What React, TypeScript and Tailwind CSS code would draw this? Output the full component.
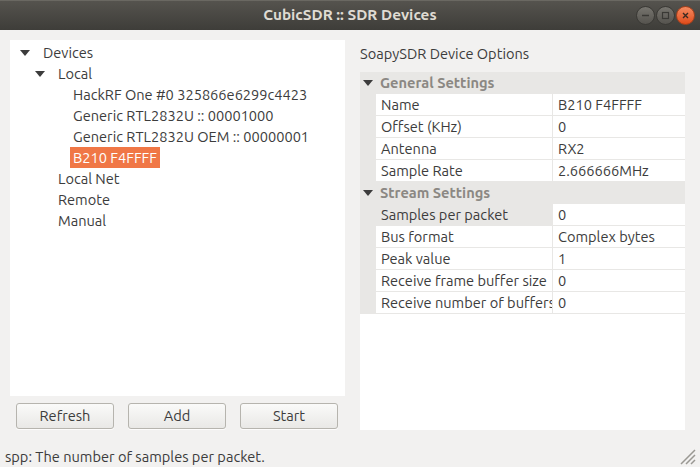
import React from "react";

type Row = { label: string; value: string; selected?: boolean };

const GENERAL: Row[] = [
  { label: "Name", value: "B210 F4FFFF" },
  { label: "Offset (KHz)", value: "0" },
  { label: "Antenna", value: "RX2" },
  { label: "Sample Rate", value: "2.666666MHz" },
];

const STREAM: Row[] = [
  { label: "Samples per packet", value: "0", selected: true },
  { label: "Bus format", value: "Complex bytes" },
  { label: "Peak value", value: "1" },
  { label: "Receive frame buffer size", value: "0" },
  { label: "Receive number of buffers", value: "0" },
];

function Arrow({ className = "" }: { className?: string }) {
  return (
    <svg width="10" height="6" viewBox="0 0 10 6" className={className}>
      <path d="M0 0 L10 0 L5 6 Z" fill="#3c3c3c" />
    </svg>
  );
}

function TreeItem({
  level,
  label,
  open,
  selected,
}: {
  level: number;
  label: string;
  open?: boolean;
  selected?: boolean;
}) {
  return (
    <div className="flex h-[21px] items-center" style={{ paddingLeft: 10 + level * 15 }}>
      <div className="flex w-[23px] shrink-0 items-center">{open && <Arrow />}</div>
      <span
        className={`-ml-[3px] px-[3px] leading-[21px] ${
          selected ? "bg-[#f07746] text-white" : ""
        }`}
      >
        {label}
      </span>
    </div>
  );
}

function Section({ title, rows }: { title: string; rows: Row[] }) {
  return (
    <>
      <div className="flex h-[22px] items-center bg-[#e8e7e5]">
        <div className="flex w-[16px] justify-center">
          <Arrow />
        </div>
        <span className="pl-[4px] font-bold text-[#8b8883]">{title}</span>
      </div>
      {rows.map((r) => (
        <div key={r.label} className="flex h-[22px] bg-[#e8e7e5]">
          <div
            className={`ml-[16px] w-[177px] overflow-hidden whitespace-nowrap border-b border-r border-[#e8e7e5] pl-[5px] leading-[21px] ${
              r.selected ? "bg-[#e8e7e5]" : "bg-white"
            }`}
          >
            {r.label}
          </div>
          <div className="flex-1 overflow-hidden whitespace-nowrap border-b border-[#e8e7e5] bg-white pl-[5px] leading-[21px]">
            {r.value}
          </div>
        </div>
      ))}
    </>
  );
}

function WinButton({ kind }: { kind: "min" | "max" | "close" }) {
  const close = kind === "close";
  return (
    <div
      className={`flex h-[19px] w-[19px] items-center justify-center rounded-full border ${
        close
          ? "border-[#a8401b] bg-gradient-to-b from-[#f48a5f] to-[#df4a16]"
          : "border-[#3a3935] bg-gradient-to-b from-[#77756f] to-[#55534e]"
      }`}
    >
      <svg width="9" height="9" viewBox="0 0 9 9">
        {kind === "min" && <path d="M1 4.5 H8" stroke="#3a3935" strokeWidth="1.5" />}
        {kind === "max" && (
          <rect x="1.5" y="1.5" width="6" height="6" fill="none" stroke="#3a3935" strokeWidth="1.2" />
        )}
        {close && <path d="M2 2 L7 7 M7 2 L2 7" stroke="#3a2a22" strokeWidth="1.4" />}
      </svg>
    </div>
  );
}

export default function App() {
  return (
    <div className="flex h-[467px] w-[700px] flex-col overflow-hidden bg-[#f2f1f0] font-['Ubuntu','Noto_Sans',sans-serif] text-[14.6px] text-[#3c3c3c]">
      {/* title bar */}
      <div className="relative flex h-[30px] shrink-0 items-center justify-center border-t border-[#6a6862] bg-gradient-to-b from-[#55534e] to-[#3e3d39]">
        <span className="text-[15.3px] font-bold text-[#dfdbd2]">CubicSDR :: SDR Devices</span>
        <div className="absolute right-[5px] top-[5px] flex gap-[1px]">
          <WinButton kind="min" />
          <WinButton kind="max" />
          <WinButton kind="close" />
        </div>
      </div>

      <div className="flex flex-1">
        {/* left: device tree */}
        <div className="flex w-[350px] flex-col pl-[10px] pr-[5px] pt-[10px]">
          <div className="h-[356px] bg-white pt-[2px]">
            <TreeItem level={0} label="Devices" open />
            <TreeItem level={1} label="Local" open />
            <TreeItem level={2} label="HackRF One #0 325866e6299c4423" />
            <TreeItem level={2} label="Generic RTL2832U :: 00001000" />
            <TreeItem level={2} label="Generic RTL2832U OEM :: 00000001" />
            <TreeItem level={2} label="B210 F4FFFF" selected />
            <TreeItem level={1} label="Local Net" />
            <TreeItem level={1} label="Remote" />
            <TreeItem level={1} label="Manual" />
          </div>
          <div className="mt-[7px] flex gap-[14px] px-[6px]">
            {["Refresh", "Add", "Start"].map((b) => (
              <button
                key={b}
                className="h-[26px] w-[98px] rounded-[3px] border border-[#b6b4ae] bg-gradient-to-b from-[#fafaf9] to-[#e9e8e6] text-[#3c3c3c] shadow-[0_1px_0_rgba(255,255,255,0.8)]"
              >
                {b}
              </button>
            ))}
          </div>
        </div>

        {/* right: device options */}
        <div className="flex flex-1 flex-col pl-[10px] pr-[15px]">
          <div className="flex h-[42px] items-center pt-[5px]">SoapySDR Device Options</div>
          <div className="h-[358px] bg-white">
            <Section title="General Settings" rows={GENERAL} />
            <Section title="Stream Settings" rows={STREAM} />
          </div>
        </div>
      </div>

      {/* status bar */}
      <div className="relative flex h-[20px] shrink-0 items-center pl-[5px] pb-[1px]">
        spp: The number of samples per packet.
        <svg width="16" height="16" viewBox="0 0 16 16" className="absolute bottom-[2px] right-[4px]">
          <path d="M15 1 L1 15 M15 6 L6 15 M15 11 L11 15" stroke="#9a9893" strokeWidth="1.5" />
        </svg>
      </div>
    </div>
  );
}
